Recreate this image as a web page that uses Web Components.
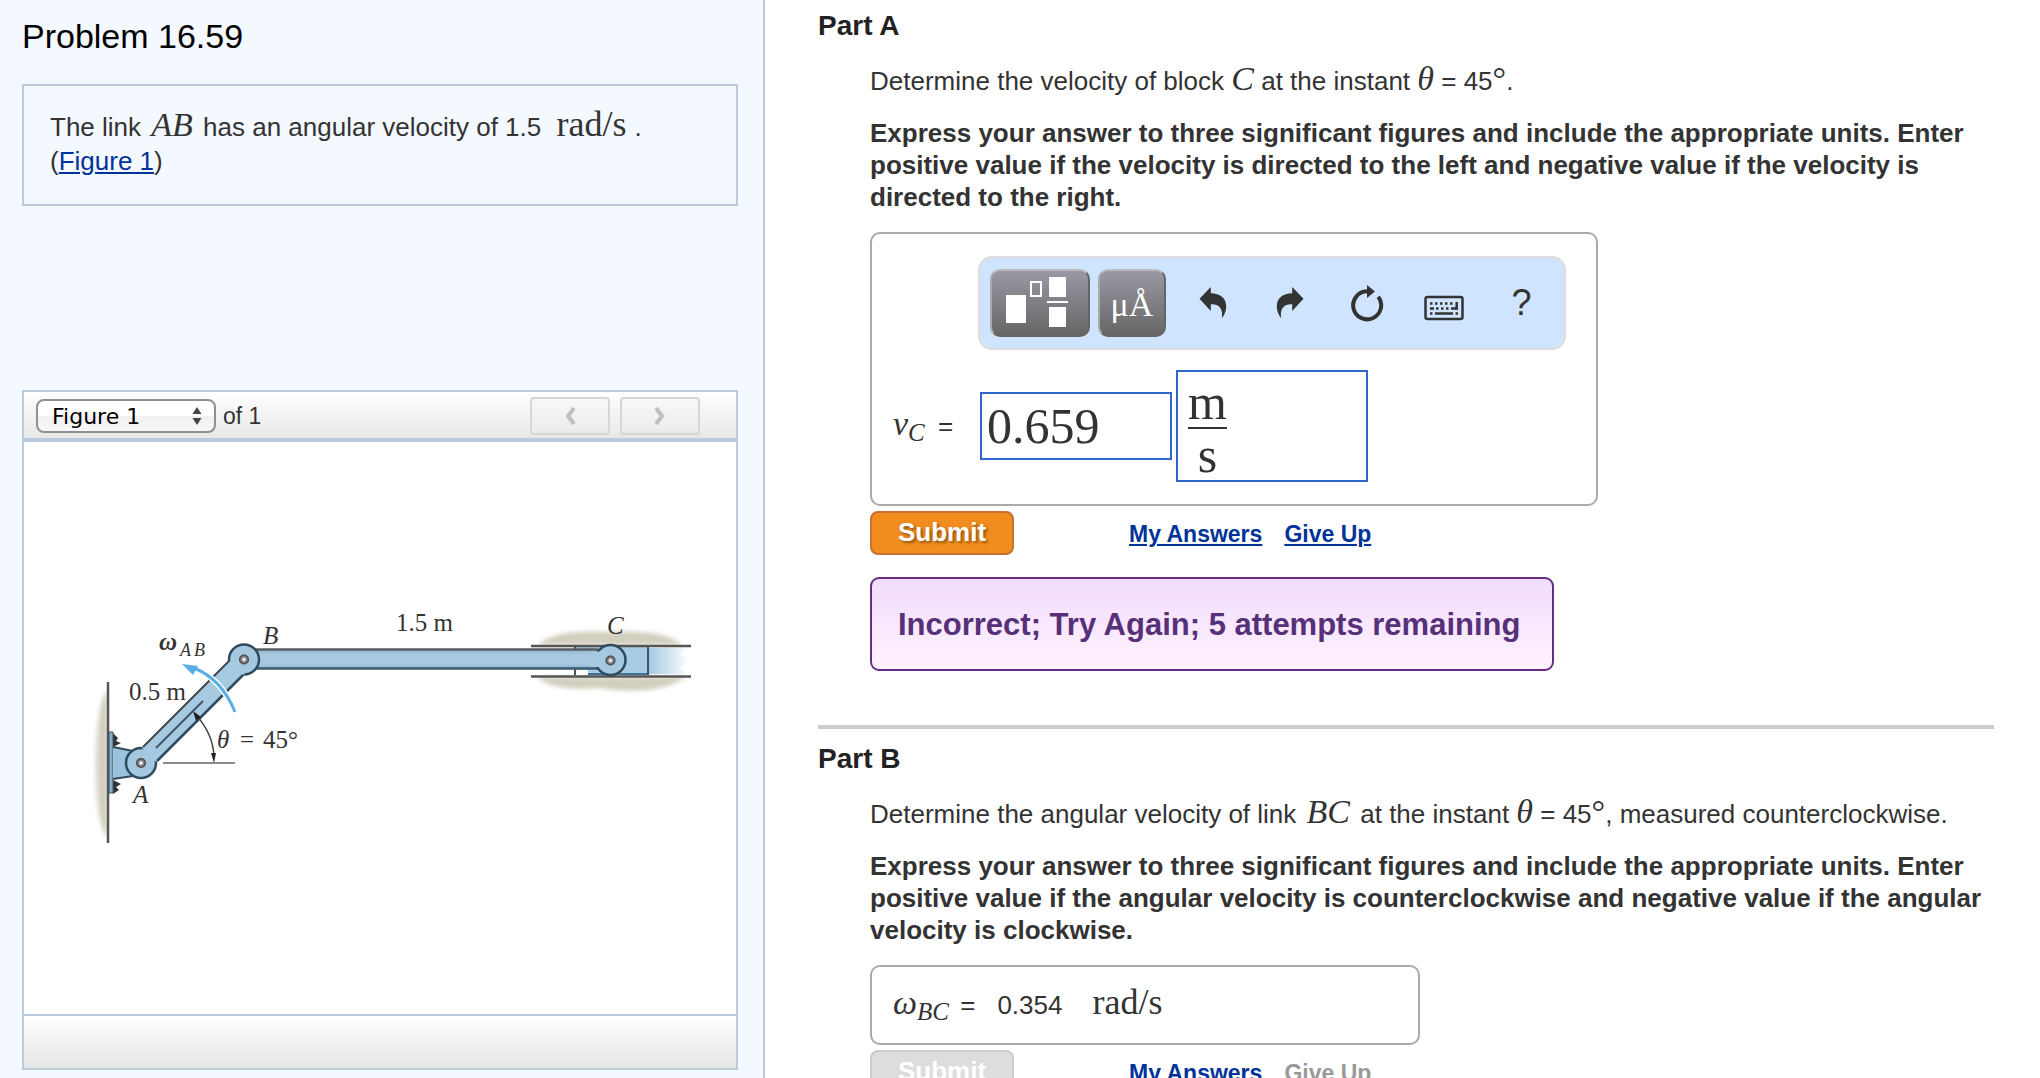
<!DOCTYPE html>
<html lang="en">
<head>
<meta charset="utf-8">
<title>Problem 16.59</title>
<style>
	body {
		margin: 0;
		background: #fff;
		color: #333;
		font: 26px/32px "Liberation Sans", Arial, sans-serif;
	}
	a { color: #039; }
</style>
</head>
<body>
<problem-page>
	<problem-statement slot="side" heading="Problem 16.59">
		The link <math-text italic wide>AB</math-text> has an angular velocity of 1.5 <math-text unit>rad/s</math-text>.<br>
		(<a href="#figure">Figure 1</a>)
	</problem-statement>
	<figure-viewer slot="side" id="figure"></figure-viewer>

	<problem-part heading="Part A">
		<span slot="question">Determine the velocity of block <math-text italic>C</math-text> at the instant <math-text italic>θ</math-text> = 45<math-text>°</math-text>.</span>
		<span slot="hint">Express your answer to three significant figures and include the appropriate units. Enter positive value if the velocity is directed to the left and negative value if the velocity is directed to the right.</span>
		<answer-editor></answer-editor>
		<answer-actions></answer-actions>
		<feedback-box>Incorrect; Try Again; 5 attempts remaining</feedback-box>
	</problem-part>
	<problem-part heading="Part B" divided>
		<span slot="question">Determine the angular velocity of link <math-text italic wide>BC</math-text> at the instant <math-text italic>θ</math-text> = 45<math-text>°</math-text>, measured counterclockwise.</span>
		<span slot="hint">Express your answer to three significant figures and include the appropriate units. Enter positive value if the angular velocity is counterclockwise and negative value if the angular velocity is clockwise.</span>
		<answer-result value="0.354" unit="rad/s"></answer-result>
		<answer-actions disabled></answer-actions>
	</problem-part>
</problem-page>

<script>
const createTemplate = (html) => {
	const template = document.createElement('template');
	template.innerHTML = html.trim();
	return template;
};

class BaseElement extends HTMLElement {
	constructor() {
		super();
		this.attachShadow({ mode: 'open' });
		this.shadowRoot.appendChild(this.constructor.template.content.cloneNode(true));
	}

	setText(id, value) {
		const el = this.shadowRoot.getElementById(id);
		if (el) el.textContent = value;
	}
}

// page frame: side bar on the left, parts on the right
class ProblemPage extends BaseElement {}
ProblemPage.template = createTemplate(`
<style>
	:host {
		display: flex;
		height: 100vh;
		overflow: hidden;
	}
	aside {
		box-sizing: border-box;
		flex: 0 0 37.5%;
		padding: 16px 25px 0 22px;
		border-right: 2px solid #bacbdc;
		background: #f4f8ff;
	}
	main {
		flex: 1;
		min-width: 0;
		padding: 10px 46px 0 53px;
	}
</style>
<aside><slot name="side"></slot></aside>
<main><slot></slot></main>
`);

// serif run inside a sentence; no white space around the slot, it would show
class MathText extends BaseElement {}
MathText.template = createTemplate(`
<style>
	:host {
		font-family: "Liberation Serif", serif;
		font-size: 34px;
		line-height: 0;
	}
	:host([italic]) { font-style: italic; }
	:host([wide]) { padding: 0 3px; }
	:host([unit]) {
		padding: 0 8px;
		font-size: 36px;
	}
</style><slot></slot>
`);

class ProblemStatement extends BaseElement {
	connectedCallback() {
		this.setText('heading', this.getAttribute('heading'));
	}
}
ProblemStatement.template = createTemplate(`
<style>
	:host { display: block; }
	h1 {
		margin: 0 0 28px;
		color: #000;
		font-size: 34px;
		font-weight: normal;
		line-height: 40px;
	}
	.statement {
		padding: 24px 26px 26px;
		border: 2px solid #bacbdc;
		line-height: 34px;
	}
</style>
<h1 id="heading"></h1>
<div class="statement"><slot></slot></div>
`);

class FigureViewer extends BaseElement {}
FigureViewer.template = createTemplate(`
<style>
	:host {
		display: block;
		margin-top: 184px;
		border: 2px solid #bacbdc;
		background: #fff;
	}
	.bar {
		display: flex;
		align-items: center;
		box-sizing: border-box;
		height: 50px;
		padding: 2px 36px 0 12px;
		border-bottom: 4px solid #bacbdc;
		background: linear-gradient(#fff, #e8e8e8);
		font-size: 23px;
	}
	.picker {
		display: grid;
		align-items: center;
		margin-right: 7px;
	}
	select, .picker svg { grid-area: 1 / 1; }
	.picker svg {
		justify-self: end;
		margin-right: 14px;
		pointer-events: none;
	}
	select {
		appearance: none;
		box-sizing: border-box;
		width: 180px;
		height: 34px;
		padding: 0 14px;
		border: 2px solid #909090;
		border-radius: 8px;
		background: linear-gradient(#fff 50%, #f0f0f0 50%, #f8f8f8);
		color: #000;
		font: 22px "DejaVu Sans", sans-serif;
	}
	.bar button {
		display: flex;
		align-items: center;
		justify-content: center;
		width: 80px;
		height: 38px;
		margin-left: 10px;
		padding: 0;
		border: 2px solid #d6d6d6;
		border-radius: 4px;
		background: linear-gradient(#f8f8f8, #ebebeb);
	}
	.bar button:first-of-type { margin-left: auto; }
	.drawing {
		display: block;
		width: 100%;
		height: auto;
	}
	.foot {
		height: 52px;
		border-top: 2px solid #bacbdc;
		background: linear-gradient(#fff, #e6e6e6);
	}
</style>
<div class="bar">
	<div class="picker">
		<select id="picker" aria-label="Figure"><option>Figure 1</option></select>
		<svg width="10" height="18" fill="#444"><path d="M5 0L9.500 7H.5ZM5 18L.5 11H9.500Z"/></svg>
	</div>
	<label for="picker">of 1</label>
	<button disabled aria-label="Previous figure"><svg width="14" height="18" fill="none" stroke="#bfbfbf" stroke-width="4"><path d="M11 1L5 9L11 17"/></svg></button>
	<button disabled aria-label="Next figure"><svg width="14" height="18" fill="none" stroke="#bfbfbf" stroke-width="4"><path d="M3 1L9 9L3 17"/></svg></button>
</div>
<svg class="drawing" viewBox="24 442 712 572" role="img" aria-label="Crank AB and link BC driving block C">
	<defs>
		<filter id="soft" x="-30%" y="-30%" width="160%" height="160%"><feGaussianBlur stdDeviation="2"/></filter>
		<linearGradient id="bar" x1="0" y1="0" x2="0" y2="1">
			<stop offset="0" stop-color="#8fb3cb"/><stop offset=".3" stop-color="#a9cbe1"/><stop offset=".8" stop-color="#a4c7df"/><stop offset="1" stop-color="#7fa8c4"/>
		</linearGradient>
		<linearGradient id="wall"><stop offset="0" stop-color="#e4e2d6"/><stop offset="1" stop-color="#c5c2b0"/></linearGradient>
		<linearGradient id="trail"><stop offset="0" stop-color="#a4c9e4"/><stop offset="1" stop-color="#fff"/></linearGradient>
		<radialGradient id="pin"><stop offset=".1" stop-color="#fff"/><stop offset=".5" stop-color="#8c8c8c"/><stop offset="1" stop-color="#333"/></radialGradient>
	</defs>

	<!-- wall and bracket -->
	<path d="M107 690C98 705 95 740 95 765C95 795 98 822 107 838Z" fill="url(#wall)" filter="url(#soft)"/>
	<path d="M108 682V843" stroke="#555" stroke-width="2.500"/>
	<path d="M113 733L118 738L116 741L121 743L113 747ZM113 780L121 784L116 787L119 790L113 794Z" fill="#333"/>
	<path d="M109 732H113V793H109Z" fill="#86aeca" stroke="#3c5566" stroke-width="1"/>
	<path d="M113 747L133 751V776L113 779Z" fill="#9cc3de"/>
	<path d="M113 747L133 751M133 776L113 779" stroke="#33495a" stroke-width="2"/>

	<!-- guide and block C -->
	<path d="M538 645C550 634 570 630 610 632C650 630 672 635 682 645Z" fill="#d3cfbf" filter="url(#soft)"/>
	<path d="M536 677C550 688 570 690 600 688C630 693 665 692 686 677Z" fill="#d3cfbf" filter="url(#soft)"/>
	<path d="M649 648H688L680 654L689 661L680 668L688 674H649Z" fill="url(#trail)"/>
	<path d="M575 647H648V675H575Z" fill="#a8cce4"/>
	<path d="M576 670H588V675H576Z" fill="#fff"/>
	<path d="M575 647V675M648 647V675" stroke="#3c5566" stroke-width="2"/>
	<path d="M588 674H647" stroke="#3f7196" stroke-width="2"/>
	<path d="M531 646H691M531 676.500H691" stroke="#555" stroke-width="2.500"/>

	<!-- link BC -->
	<path d="M255 649H540L590 650L598 650V668L590 669H255Z" fill="url(#bar)"/>
	<path d="M255 649.500H598" stroke="#565e64" stroke-width="2.500"/>
	<path d="M255 668.500H598" stroke="#3f5c70" stroke-width="2.500"/>
	<circle cx="610.500" cy="660" r="15" fill="#a4c8e0" stroke="#2f4a5c" stroke-width="2.500"/>
	<path d="M590 651.500H604V667H590Z" fill="#a6c9e0"/>
	<circle cx="610.500" cy="660.500" r="5" fill="url(#pin)"/>

	<!-- crank AB -->
	<circle cx="141" cy="763" r="15" fill="#a4c8e0" stroke="#2f4a5c" stroke-width="2.500"/>
	<circle cx="244" cy="659.500" r="15" fill="#a4c8e0" stroke="#2f4a5c" stroke-width="2.500"/>
	<path d="M142 748L232 658L246 672L156 762Z" fill="#a6cae2"/>
	<path d="M143 747L230 660" stroke="#444" stroke-width="2"/>
	<path d="M157 761L243 675" stroke="#2f4a5c" stroke-width="2.500"/>
	<circle cx="141" cy="763" r="5" fill="url(#pin)"/>
	<circle cx="244" cy="659.500" r="5" fill="url(#pin)"/>
	<path d="M156 748L203 701" stroke="#3c5566" stroke-width="2"/>

	<!-- rotation arrow -->
	<path d="M194 668C214 676 227 692 235 712" fill="none" stroke="#fff" stroke-width="6"/>
	<path d="M194 668C214 676 227 692 235 712" fill="none" stroke="#58aee8" stroke-width="3"/>
	<path d="M182 664L198 666L193 675Z" fill="#58aee8"/>

	<!-- angle -->
	<path d="M163 763H235" stroke="#666" stroke-width="1.500"/>
	<path d="M196 715C206 726 213 738 214 756" fill="none" stroke="#444" stroke-width="1.500"/>
	<path d="M193 711L201 717L196 721ZM211 753H216L214 763Z" fill="#222"/>

	<g font-family="Liberation Serif, serif" font-size="25" fill="#333">
		<text x="129" y="700">0.5 m</text>
		<text x="396" y="631">1.5 m</text>
		<text x="217" y="748" font-style="italic">θ</text>
		<text x="240" y="748">=</text>
		<text x="263" y="748">45°</text>
		<g font-style="italic">
			<text x="263" y="644">B</text>
			<text x="607" y="634">C</text>
			<text x="133" y="803">A</text>
			<text x="159" y="650" font-weight="bold">ω</text>
			<text x="180" y="656" font-size="18">A</text>
			<text x="194" y="656" font-size="18">B</text>
		</g>
	</g>
</svg>
<div class="foot"></div>
`);

class ProblemPart extends BaseElement {
	connectedCallback() {
		this.setText('heading', this.getAttribute('heading'));
	}
}
ProblemPart.template = createTemplate(`
<style>
	:host { display: block; }
	:host([divided]) {
		margin-top: 54px;
		padding-top: 14px;
		border-top: 4px solid #ccc;
	}
	h2 {
		margin: 0 0 23px;
		color: #222;
		font-size: 28px;
		line-height: 32px;
	}
	.body { padding-left: 52px; }
	p { margin: 0 0 20px; }
	p.hint {
		margin-bottom: 19px;
		font-weight: bold;
	}
</style>
<h2 id="heading"></h2>
<div class="body">
	<p><slot name="question"></slot></p>
	<p class="hint"><slot name="hint"></slot></p>
	<slot></slot>
</div>
`);

class AnswerToolbar extends BaseElement {}
AnswerToolbar.template = createTemplate(`
<style>
	:host {
		display: flex;
		gap: 8px;
		padding: 11px 4px 11px 10px;
		border: 2px solid #ddd;
		border-radius: 14px;
		background: #cfe5ff;
	}
	button {
		display: flex;
		align-items: center;
		justify-content: center;
		height: 68px;
		padding: 0;
		border: 0;
		background: none;
		color: #333;
		font: 36px "Liberation Sans", sans-serif;
	}
	.key {
		box-sizing: border-box;
		width: 68px;
		padding-top: 4px;
		border: 2px solid #666;
		border-top-color: #bbb;
		border-left-color: #aaa;
		border-radius: 10px;
		background: linear-gradient(#9a98a3, #666);
		color: #fff;
		font: 34px "Liberation Serif", serif;
	}
	.wide {
		width: 100px;
		padding-top: 0;
	}
	.icons {
		display: flex;
		flex: 1;
	}
	.icons button { flex: 1; }
</style>
<button class="key wide" aria-label="Templates">
	<svg width="96" height="64" viewBox="2 2 96 64" fill="#fff">
		<path d="M16 26H36V54H16ZM59 8H76V28H59ZM57 32H78V34H57ZM59 38H76V58H59Z"/>
		<path d="M41 13H51V27H41Z" fill="none" stroke="#fff" stroke-width="2"/>
	</svg>
</button>
<button class="key" aria-label="Symbols">μÅ</button>
<div class="icons">
	<button aria-label="Undo"><svg width="40" height="40" fill="#333"><path d="M6.500 15.700L17.800 4V10.300C27 10.500 33.200 15 33.200 23.500C33.200 28 31.500 32 28.800 35.300C30 27.500 28 21 17.800 21.300V28Z"/></svg></button>
	<button aria-label="Redo"><svg width="40" height="40" fill="#333"><path d="M33.500 15.700L22.200 4V10.300C13 10.500 6.800 15 6.800 23.500C6.800 28 8.500 32 11.200 35.300C10 27.500 12 21 22.200 21.300V28Z"/></svg></button>
	<button aria-label="Reset"><svg width="40" height="40"><path d="M31.300 13.800A14 14 0 1 1 20 8.300" fill="none" stroke="#333" stroke-width="4"/><path d="M20 2L28 8.500L20 15Z" fill="#333"/></svg></button>
	<button aria-label="Keyboard"><svg width="40" height="40" fill="none" stroke="#333">
		<rect x="1.500" y="14" width="37" height="22" rx="2" stroke-width="2.500"/>
		<path d="M6 20.500H31" stroke-width="2.500" stroke-dasharray="2.500 2.500"/>
		<path d="M6 25.500H10M12 25.500H14.500M17 25.500H19.500M22 25.500H24.500M27 25.500H34M6 30.500H8.500M11 30.500H29M31.500 30.500H34" stroke-width="2.500"/>
		<path d="M32.700 19V26.500" stroke-width="2.500"/>
	</svg></button>
	<button aria-label="Help">?</button>
</div>
`);
customElements.define('answer-toolbar', AnswerToolbar);

class AnswerEditor extends BaseElement {}
AnswerEditor.template = createTemplate(`
<style>
	:host {
		display: grid;
		grid-template-columns: 85px 1fr;
		gap: 20px 0;
		align-items: center;
		box-sizing: border-box;
		max-width: 728px;
		padding: 22px 30px 22px 21px;
		border: 2px solid #aaa;
		border-radius: 10px;
	}
	answer-toolbar { grid-column: 2; }
	i {
		font-family: "Liberation Serif", serif;
		font-size: 34px;
		line-height: 0;
	}
	sub {
		margin-right: 6px;
		font-size: 25px;
		vertical-align: -6px;
	}
	.fields {
		display: flex;
		gap: 4px;
		align-items: center;
		padding-left: 2px;
	}
	.field {
		box-sizing: border-box;
		width: 192px;
		border: 2px solid #36c;
		border-radius: 0;
		background: #fff;
		color: #333;
		font: 50px/44px "Liberation Serif", serif;
	}
	input.field {
		height: 68px;
		padding: 0 5px;
	}
	div.field { padding: 8px 10px 3px; }
	.fraction {
		display: inline-grid;
		justify-items: center;
		vertical-align: top;
	}
	.fraction span:first-child {
		margin-bottom: 4px;
		padding-bottom: 3px;
		border-bottom: 2px solid #333;
	}
</style>
<answer-toolbar></answer-toolbar>
<label for="value"><i>v<sub>C</sub></i> =</label>
<div class="fields">
	<input id="value" class="field" value="0.659">
	<div class="field" role="textbox" contenteditable="true" spellcheck="false" aria-label="Units"><span class="fraction"><span>m</span><span>s</span></span></div>
</div>
`);

class AnswerResult extends BaseElement {
	connectedCallback() {
		this.setText('value', this.getAttribute('value'));
		this.setText('unit', this.getAttribute('unit'));
	}
}
AnswerResult.template = createTemplate(`
<style>
	:host {
		display: flex;
		align-items: baseline;
		box-sizing: border-box;
		max-width: 550px;
		padding: 21px;
		border: 2px solid #aaa;
		border-radius: 10px;
		line-height: 34px;
	}
	i, #unit {
		font-family: "Liberation Serif", serif;
		font-size: 34px;
		line-height: 0;
	}
	#unit { font-size: 36px; }
	sub {
		margin-right: 4px;
		font-size: 25px;
		vertical-align: -6px;
	}
	#value { margin: 0 30px 0 22px; }
</style>
<span><i>ω<sub>BC</sub></i> =</span>
<span id="value"></span>
<span id="unit"></span>
`);

class AnswerActions extends BaseElement {
	connectedCallback() {
		if (this.hasAttribute('disabled')) {
			this.shadowRoot.querySelector('button').disabled = true;
			this.shadowRoot.getElementById('giveup').removeAttribute('href');
		}
	}
}
AnswerActions.template = createTemplate(`
<style>
	:host {
		display: flex;
		align-items: center;
		padding-top: 5px;
		font-size: 23px;
		font-weight: bold;
	}
	button {
		box-sizing: border-box;
		width: 144px;
		height: 44px;
		margin-right: 115px;
		padding: 0 0 2px;
		border: 2px solid #c77133;
		border-radius: 8px;
		background: #f08d1e;
		color: #fff;
		font: bold 26px "Liberation Sans", sans-serif;
		text-shadow: 2px 2px 3px rgba(0, 0, 0, .4);
	}
	button:disabled {
		border-color: #ccc;
		background: #ddd;
		text-shadow: none;
	}
	a {
		margin: 2px 22px 0 0;
		color: #999;
	}
	a[href] {
		color: #039;
		text-decoration-thickness: 2px;
		text-underline-offset: 2px;
	}
</style>
<button>Submit</button>
<a href="#answers">My Answers</a>
<a href="#giveup" id="giveup">Give Up</a>
`);

class FeedbackBox extends BaseElement {}
FeedbackBox.template = createTemplate(`
<style>
	:host {
		display: block;
		box-sizing: border-box;
		width: fit-content;
		margin-top: 22px;
		padding: 30px 32px 28px 26px;
		border: 2px solid #662d82;
		border-radius: 9px;
		background: linear-gradient(#f1dcfd, #fff2ff);
		color: #563078;
		font-size: 31px;
		font-weight: bold;
	}
</style>
<slot></slot>
`);

customElements.define('problem-page', ProblemPage);
customElements.define('math-text', MathText);
customElements.define('problem-statement', ProblemStatement);
customElements.define('figure-viewer', FigureViewer);
customElements.define('problem-part', ProblemPart);
customElements.define('answer-editor', AnswerEditor);
customElements.define('answer-result', AnswerResult);
customElements.define('answer-actions', AnswerActions);
customElements.define('feedback-box', FeedbackBox);
</script>
</body>
</html>
